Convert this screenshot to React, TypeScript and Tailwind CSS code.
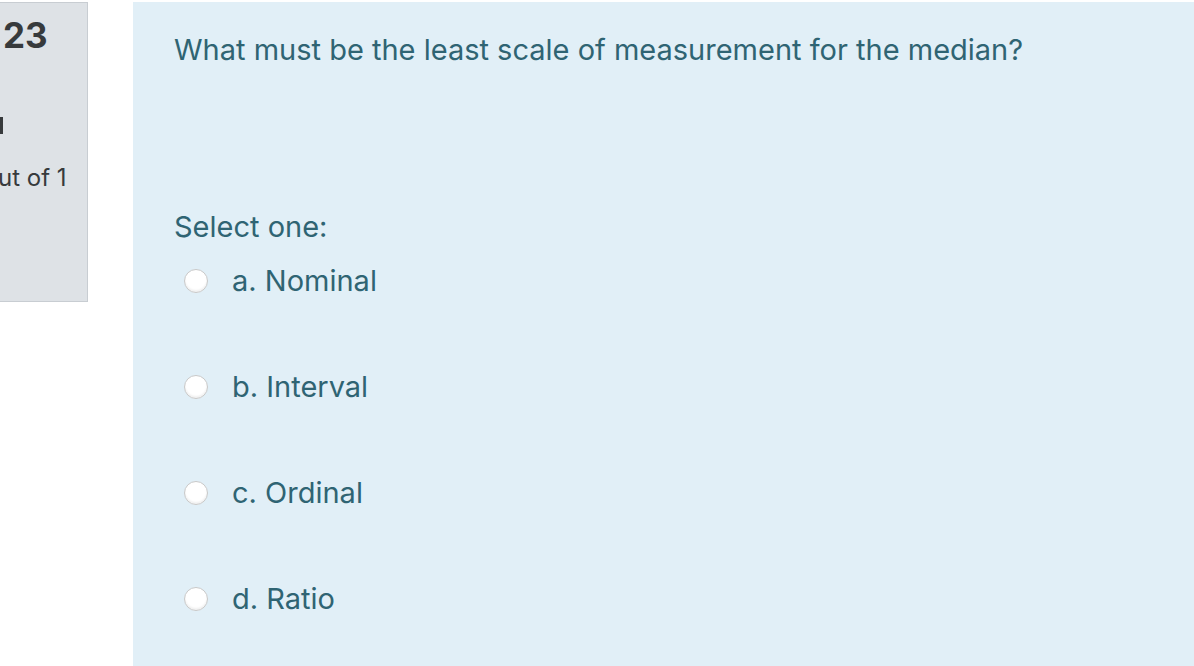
import React from "react";

const options = ["a. Nominal", "b. Interval", "c. Ordinal", "d. Ratio"];

function Radio() {
  return (
    <span className="w-[24px] h-[24px] rounded-full bg-white border border-[#c8c8c8] shadow-[inset_0_-2px_2px_rgba(0,0,0,0.06)] shrink-0" />
  );
}

export default function App() {
  return (
    <div
      className="w-[1194px] h-[666px] bg-white overflow-hidden flex items-start pt-[2px] text-[#2f6473]"
      style={{ fontFamily: "Inter, 'Liberation Sans', sans-serif" }}
    >
      {/* question info panel, cut at the left edge */}
      <div className="w-[88px] h-[300px] bg-[#dee2e6] border border-l-0 border-[#c8cdd2] shrink-0 text-[#373a3c] overflow-hidden">
        <div className="pl-[3px] pt-[12px] text-[35px] font-bold leading-[40px]">23</div>
        <div className="mt-[62px] w-[3px] h-[17px] bg-[#373a3c]" />
        <div className="mt-[30px] ml-[-2px] text-[24px] leading-[28px] whitespace-nowrap">ut of 1</div>
      </div>

      <div className="ml-[45px] flex-1 h-[664px] bg-[#e1eff7] pl-[41px] pt-[30px]">
        <p className="text-[29px] leading-[36px]">
          What must be the least scale of measurement for the median?
        </p>
        <p className="mt-[141px] text-[29px] leading-[36px]">Select one:</p>
        <div className="mt-[18px] flex flex-col gap-[70px]">
          {options.map((o) => (
            <label key={o} className="flex items-center h-[36px] pl-[10px]">
              <Radio />
              <span className="ml-[24px] text-[29px] leading-[36px]">{o}</span>
            </label>
          ))}
        </div>
      </div>
    </div>
  );
}
